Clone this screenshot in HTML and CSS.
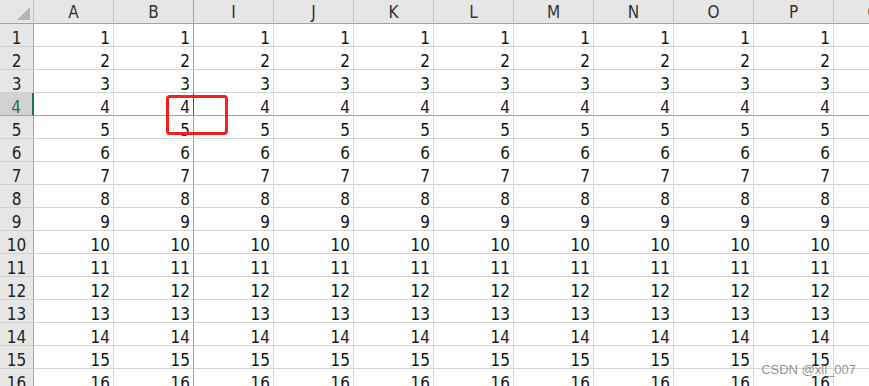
FILE: index.html
```html
<!DOCTYPE html>
<html lang="en">
<head>
    <meta charset="UTF-8">
    <meta name="viewport" content="width=device-width, initial-scale=1.0">
    <link rel="stylesheet" href="styles.css">
    <title>Sheet1</title>
</head>
<body>
    <div class="wrap">
        <div class="sheet" id="sheet">
            <div class="corner"><span class="corner-tri"></span></div>
        </div>

        <div class="callout"></div>
        <div class="watermark">CSDN @xll_007</div>
    </div>

    <script>
        const sheet = document.getElementById("sheet");
        const cols = ["A", "B", "I", "J", "K", "L", "M", "N", "O", "P", "Q"];
        const activeRow = 4;

        function cell(cls, text) {
            const el = document.createElement("div");
            el.className = cls;
            el.textContent = text;
            sheet.appendChild(el);
            return el;
        }

        // column letters
        cols.forEach(c => {
            cell("col-head" + (c === "B" ? " split-col" : ""), c);
        });

        // rows 1..16, every visible column holds the row number
        for (let r = 1; r <= 16; r++) {
            let cls = "row-head";
            if (r === activeRow) cls += " active split-row";
            cell(cls, r);

            cols.forEach(c => {
                let cc = "cell";
                if (c === "B") cc += " split-col";
                if (r === activeRow) cc += " split-row";
                if (c === "B" && r === activeRow) cc += " mark";
                cell(cc, c === "Q" ? "" : r);
            });
        }
    </script>
</body>
</html>
```

FILE: styles.css
```css
body {
  margin: 0;
  background: #ffffff;
  overflow: hidden;
  font-family: "DejaVu Sans Condensed", "DejaVu Sans", sans-serif;
}

.wrap {
  position: relative;
  width: 869px;
  height: 386px;
  overflow: hidden;
}

.sheet {
  display: grid;
  grid-template-columns: 34px repeat(11, 80px);
  grid-template-rows: 24px;
  grid-auto-rows: 23px;
  width: max-content;
  font-size: 17px;
  line-height: 20px;
  color: #151515;
}

.sheet > div {
  box-sizing: border-box;
  overflow: hidden;
  white-space: nowrap;
}

.corner {
  background: #e6e6e6;
  border-right: 1px solid #bdbdbd;
  border-bottom: 1px solid #a3a3a3;
  display: flex;
  align-items: flex-end;
  justify-content: flex-end;
  padding: 0 3px 3px 0;
}

.corner-tri {
  width: 0;
  height: 0;
  border-left: 13px solid transparent;
  border-bottom: 13px solid #b5b5b5;
}

.col-head {
  background: #e6e6e6;
  border-right: 1px solid #c4c4c4;
  border-bottom: 1px solid #a3a3a3;
  text-align: center;
  padding-top: 2px;
  color: #333333;
}

.row-head {
  background: #e6e6e6;
  border-right: 1px solid #ababab;
  border-bottom: 1px solid #cfcfcf;
  text-align: center;
  padding-top: 4px;
  color: #222222;
}

.row-head.active {
  background: #d2d2d2;
  color: #217346;
  border-right: 2px solid #217346;
}

.cell {
  border-right: 1px solid #d4d4d4;
  border-bottom: 1px solid #d4d4d4;
  text-align: right;
  padding: 4px 3px 0 0;
}

.split-col {
  border-right-color: #a3a3a3;
}

.sheet > .split-row {
  border-bottom-color: #a3a3a3;
}

.cell.mark {
  border-right-color: #217346;
}

.callout {
  position: absolute;
  left: 166px;
  top: 95px;
  width: 62px;
  height: 40px;
  box-sizing: border-box;
  border: 3px solid #fa1e1e;
  border-radius: 4px;
}

.watermark {
  position: absolute;
  right: 13px;
  bottom: 9px;
  font-family: "Liberation Sans", Arial, sans-serif;
  font-size: 13px;
  color: rgba(125, 125, 125, 0.85);
}
```
